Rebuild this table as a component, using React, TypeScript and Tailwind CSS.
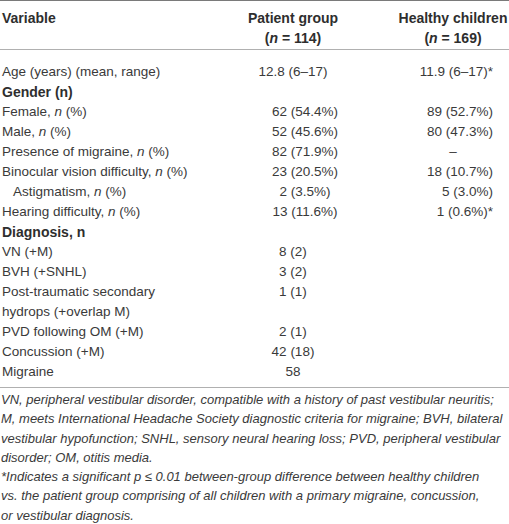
type Row = {
  label: React.ReactNode
  patient?: string
  healthy?: string
  bold?: boolean
  indent?: boolean
  pct?: boolean
  dash?: boolean
}

const n = <i>n</i>

const rows: Row[] = [
  { label: 'Age (years) (mean, range)', patient: '12.8 (6–17)', healthy: '11.9 (6–17)*' },
  { label: 'Gender (n)', bold: true },
  { label: <>Female, {n} (%)</>, patient: '62 (54.4%)', healthy: '89 (52.7%)', pct: true },
  { label: <>Male, {n} (%)</>, patient: '52 (45.6%)', healthy: '80 (47.3%)', pct: true },
  { label: <>Presence of migraine, {n} (%)</>, patient: '82 (71.9%)', healthy: '–', pct: true, dash: true },
  { label: <>Binocular vision difficulty, {n} (%)</>, patient: '23 (20.5%)', healthy: '18 (10.7%)', pct: true },
  { label: <>Astigmatism, {n} (%)</>, patient: '2 (3.5%)', healthy: '5 (3.0%)', pct: true, indent: true },
  { label: <>Hearing difficulty, {n} (%)</>, patient: '13 (11.6%)', healthy: '1 (0.6%)*', pct: true },
  { label: 'Diagnosis, n', bold: true },
  { label: 'VN (+M)', patient: '8 (2)' },
  { label: 'BVH (+SNHL)', patient: '3 (2)' },
  { label: 'Post-traumatic secondary', patient: '1 (1)' },
  { label: 'hydrops (+overlap M)' },
  { label: 'PVD following OM (+M)', patient: '2 (1)' },
  { label: 'Concussion (+M)', patient: '42 (18)' },
  { label: 'Migraine', patient: '58' },
]

const notes = [
  'VN, peripheral vestibular disorder, compatible with a history of past vestibular neuritis;',
  'M, meets International Headache Society diagnostic criteria for migraine; BVH, bilateral',
  'vestibular hypofunction; SNHL, sensory neural hearing loss; PVD, peripheral vestibular',
  'disorder; OM, otitis media.',
  '*Indicates a significant p ≤ 0.01 between-group difference between healthy children',
  'vs. the patient group comprising of all children with a primary migraine, concussion,',
  'or vestibular diagnosis.',
]

export default function App() {
  return (
    <div
      className="w-[509px] h-[524px] overflow-hidden bg-white text-[13.5px] text-[#3a3a3a]"
      style={{ fontFamily: '"Liberation Sans", Arial, sans-serif' }}
    >
      {/* header */}
      <div className="grid grid-cols-[240px_106px_51px_112px] border-t border-[#7a7a7a] border-b border-b-[#b0b0b0] pt-[7px] pb-[1px] text-[14px] font-bold leading-[20px] text-[#2e2e2e]">
        <div className="pl-[2px]">Variable</div>
        <div className="text-center whitespace-nowrap">
          Patient group
          <br />(<i>n</i> = 114)
        </div>
        <div />
        <div className="text-center whitespace-nowrap">
          Healthy children
          <br />(<i>n</i> = 169)
        </div>
      </div>

      {/* body */}
      <div className="pt-[12px] pb-[5px] border-b border-[#b0b0b0] leading-[20px]">
        {rows.map((r, i) => (
          <div key={i} className="grid grid-cols-[240px_106px_51px_112px] h-[20px]">
            <div
              className={
                'whitespace-nowrap ' +
                (r.indent ? 'pl-[13px] ' : 'pl-[2px] ') +
                (r.bold ? 'font-bold text-[14px] text-[#2e2e2e]' : '')
              }
            >
              {r.label}
            </div>
            <div className={'text-center whitespace-nowrap ' + (r.pct ? 'pl-[24px]' : '')}>
              {r.patient}
            </div>
            <div />
            <div
              className={
                'whitespace-nowrap ' + (r.dash ? 'text-center' : 'text-right pr-[16px]')
              }
            >
              {r.healthy}
            </div>
          </div>
        ))}
      </div>

      {/* footnotes */}
      <div className="pt-[2px] pl-[1px] italic text-[13px] leading-[19.3px]">
        {notes.map((t, i) => (
          <div key={i} className="whitespace-nowrap">
            {t}
          </div>
        ))}
      </div>
    </div>
  )
}
